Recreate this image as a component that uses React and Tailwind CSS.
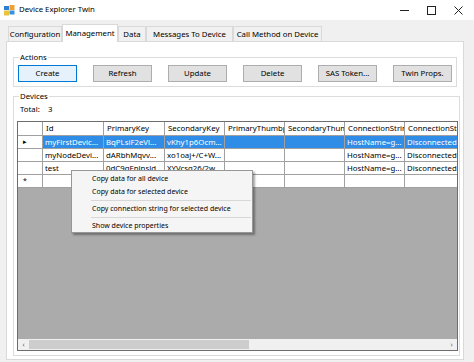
import React from 'react';

const columns = [
  { label: 'Id', w: 61 },
  { label: 'PrimaryKey', w: 61 },
  { label: 'SecondaryKey', w: 60 },
  { label: 'PrimaryThumbprint', w: 60 },
  { label: 'SecondaryThumbprint', w: 60 },
  { label: 'ConnectionString', w: 60 },
  { label: 'ConnectionState', w: 70 },
];

const rows = [
  { marker: '▸', selected: true, cells: ['myFirstDevic...', 'BqPLsiF2eVl...', 'vKhy1p6Ocm...', '', '', 'HostName=g...', 'Disconnected'] },
  { marker: '', cells: ['myNodeDevi...', 'dARbhMqvv...', 'xo1oaj+/C+W...', '', '', 'HostName=g...', 'Disconnected'] },
  { marker: '', cells: ['test', '0dC9qEnlnsld...', 'XYVcsq26/2w...', '', '', 'HostName=g...', 'Disconnected'] },
  { marker: '*', cells: ['', '', '', '', '', '', ''] },
];

const tabs = [
  { label: 'Configuration', w: 54 },
  { label: 'Management', w: 56, active: true },
  { label: 'Data', w: 28 },
  { label: 'Messages To Device', w: 87 },
  { label: 'Call Method on Device', w: 89 },
];

const actions = ['Create', 'Refresh', 'Update', 'Delete', 'SAS Token...', 'Twin Props.'];

function AppIcon() {
  return (
    <svg width="11" height="11" viewBox="0 0 11 11">
      <rect x="0" y="1" width="5" height="4" fill="#2d7fd3" />
      <rect x="5.5" y="0" width="5" height="5" fill="#f0a030" />
      <rect x="0" y="5.5" width="5" height="5" fill="#e8c440" />
      <rect x="5.5" y="5.5" width="5" height="4" fill="#3a8fe0" />
    </svg>
  );
}

function WindowControls() {
  return (
    <div className="mr-[2px] ml-auto flex h-full">
      <div className="flex w-[27px] items-center justify-center">
        <svg width="9" height="9" viewBox="0 0 9 9">
          <line x1="0" y1="4.5" x2="9" y2="4.5" stroke="#222" strokeWidth="1" />
        </svg>
      </div>
      <div className="flex w-[27px] items-center justify-center">
        <svg width="9" height="9" viewBox="0 0 9 9">
          <rect x="0.5" y="0.5" width="8" height="8" fill="none" stroke="#222" strokeWidth="1" />
        </svg>
      </div>
      <div className="flex w-[27px] items-center justify-center">
        <svg width="9" height="9" viewBox="0 0 9 9">
          <path d="M0.5 0.5 L8.5 8.5 M8.5 0.5 L0.5 8.5" stroke="#222" strokeWidth="1" />
        </svg>
      </div>
    </div>
  );
}

function GroupBox({ label, className, children }) {
  return (
    <div className={`relative border border-[#dcdcdc] ${className}`}>
      <span className="absolute -top-[6px] left-[5px] bg-white px-[1px] leading-[11px]">{label}</span>
      {children}
    </div>
  );
}

function Grid() {
  return (
    <div className="ml-[3px] mt-[6px] flex h-[230px] w-[441px] flex-col overflow-hidden border border-[#6d6d6d] bg-[#ababab]">
      <div className="flex h-[14px] shrink-0 bg-white">
        <div className="w-[25px] shrink-0 border-r border-b border-[#a0a0a0]" />
        {columns.map((c) => (
          <div
            key={c.label}
            style={{ width: c.w }}
            className="shrink-0 overflow-hidden whitespace-nowrap border-r border-b border-[#a0a0a0] pl-[3px] leading-[13px]"
          >
            {c.label}
          </div>
        ))}
      </div>
      {rows.map((r, i) => (
        <div key={i} className="flex h-[13px] shrink-0">
          <div className="flex w-[25px] shrink-0 items-center border-r border-b border-[#a0a0a0] bg-white pl-[5px] text-[7px] leading-[12px]">
            {r.marker}
          </div>
          {r.cells.map((t, j) => (
            <div
              key={j}
              style={{ width: columns[j].w }}
              className={`shrink-0 overflow-hidden whitespace-nowrap border-r border-b border-[#a0a0a0] pl-[2px] leading-[12px] ${
                r.selected ? 'bg-[#2f8de8] text-white' : 'bg-white'
              }`}
            >
              {t}
            </div>
          ))}
        </div>
      ))}
      <div className="flex-1" />
      <div className="flex h-[11px] shrink-0 items-center bg-[#f0f0f0]">
        <div className="flex w-[11px] justify-center text-[7px] leading-[10px] text-[#606060]">‹</div>
        <div className="h-[9px] w-[220px] bg-[#cdcdcd]" />
        <div className="flex-1" />
        <div className="flex w-[11px] justify-center text-[7px] leading-[10px] text-[#606060]">›</div>
      </div>
    </div>
  );
}

function ContextMenu() {
  const Item = ({ children }) => (
    <div className="h-[13px] pl-[20px] leading-[13px]">{children}</div>
  );
  const Sep = () => (
    <div className="flex h-[4px] items-center pl-[19px] pr-[1px]">
      <div className="h-px w-full bg-[#d7d7d7]" />
    </div>
  );
  return (
    <div className="absolute left-[71px] top-[170px] h-[63px] w-[182px] border border-[#979797] bg-[#f5f5f5] py-[1px] text-[7px] shadow-[2px_2px_2px_rgba(0,0,0,0.35)]">
      <Item>Copy data for all device</Item>
      <Item>Copy data for selected device</Item>
      <Sep />
      <Item>Copy connection string for selected device</Item>
      <Sep />
      <Item>Show device properties</Item>
    </div>
  );
}

export default function App() {
  return (
    <div className="relative h-[362px] w-[474px] overflow-hidden bg-[#f0f0f0] font-['Noto_Sans',sans-serif] text-[7.8px] text-black">
      <div className="flex h-[20px] items-center bg-white">
        <div className="ml-[4px]">
          <AppIcon />
        </div>
        <span className="ml-[4px]">Device Explorer Twin</span>
        <WindowControls />
      </div>

      <div className="ml-[6px] mt-[4px] w-[458px]">
        <div className="flex h-[17px] items-end pl-[2px]">
          {tabs.map((t) =>
            t.active ? (
              <div
                key={t.label}
                style={{ width: t.w }}
                className="relative z-10 -mb-px flex h-[18px] shrink-0 items-center justify-center border border-b-0 border-[#d9d9d9] bg-white"
              >
                {t.label}
              </div>
            ) : (
              <div
                key={t.label}
                style={{ width: t.w }}
                className="flex h-[15px] shrink-0 items-center justify-center border border-b-0 border-[#d9d9d9] bg-[#f0f0f0] pt-[1px]"
              >
                {t.label}
              </div>
            )
          )}
        </div>

        <div className="h-[319px] border border-[#d9d9d9] bg-white pl-[6px] pt-[15px]">
          <GroupBox label="Actions" className="h-[30px] w-[444px]">
            <div className="flex gap-[16px] pl-[4px] pt-[7px]">
              {actions.map((a, i) => (
                <div
                  key={a}
                  className={`flex h-[17px] w-[59px] items-center justify-center border ${
                    i === 0 ? 'border-[#0078d7] bg-[#e5f1fb]' : 'border-[#adadad] bg-[#e1e1e1]'
                  }`}
                >
                  {a}
                </div>
              ))}
            </div>
          </GroupBox>

          <GroupBox label="Devices" className="mt-[9px] h-[260px] w-[447px]">
            <div className="flex pl-[6px] pt-[7px] leading-[11px]">
              <span className="w-[28px]">Total:</span>
              <span>3</span>
            </div>
            <Grid />
          </GroupBox>
        </div>
      </div>

      <ContextMenu />
    </div>
  );
}
